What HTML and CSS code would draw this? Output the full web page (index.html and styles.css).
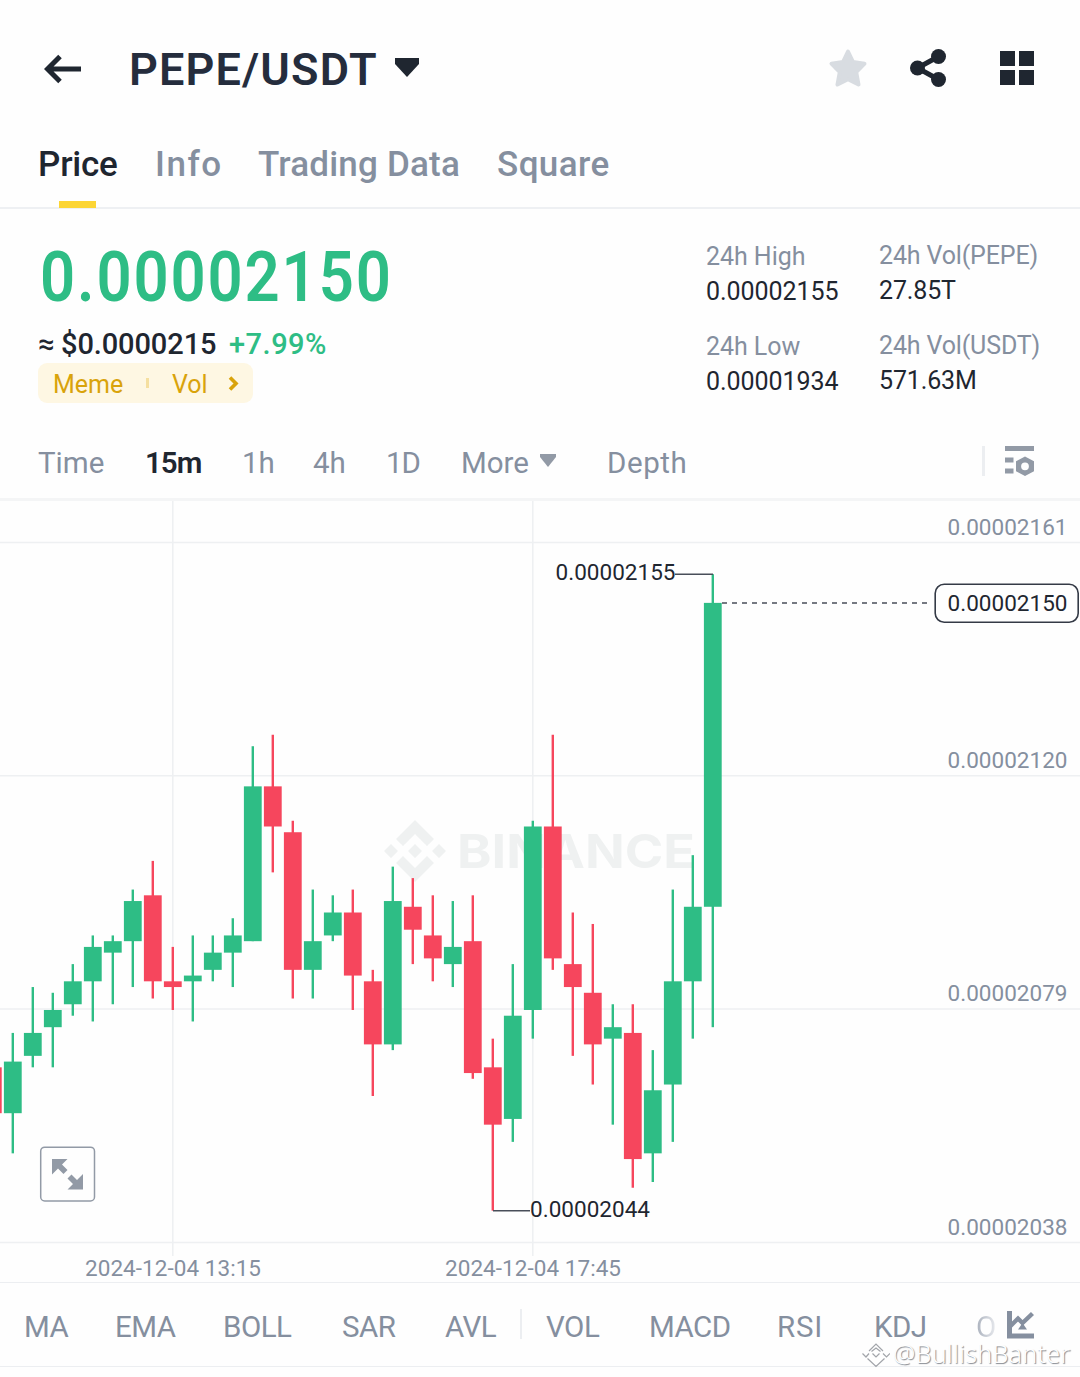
FILE: index.html
```html
<!DOCTYPE html>
<html lang="en">
<head>
<meta charset="utf-8">
<title>PEPE/USDT</title>
<link rel="stylesheet" href="styles.css">
</head>
<body>
<div class="app">
  <header class="topbar">
    <svg class="back" width="38" height="32" viewBox="0 0 38 32"><path d="M37 16H4M16 3.500L3.500 16L16 28.500" fill="none" stroke="#1f2630" stroke-width="5"/></svg>
    <h1 class="pair">PEPE/USDT</h1>
    <svg class="caret" width="24" height="19" viewBox="0 0 24 19"><path d="M0 0H24V6L12 19L0 6Z" fill="#1f2630"/></svg>
    <div class="actions">
      <svg width="40" height="40" viewBox="0 0 40 40"><path d="M20 3.500L25 14L36.500 15.700L28.200 24L30.500 36.500L20 31.300L9.500 36.500L11.800 24L3.500 15.700L15 14Z" fill="#d8dce1" stroke="#d8dce1" stroke-width="4" stroke-linejoin="round"/></svg>
      <svg width="38" height="40" viewBox="0 0 38 40"><path d="M28.500 8.500L7.500 20L28.500 31.500" fill="none" stroke="#1f2630" stroke-width="5"/><g fill="#1f2630"><circle cx="7.500" cy="20" r="7.500"/><circle cx="28.500" cy="8.500" r="7.500"/><circle cx="28.500" cy="31.500" r="7.500"/></g></svg>
      <svg width="34" height="34" viewBox="0 0 34 34"><path d="M0 0H15V15H0ZM19 0H34V15H19ZM0 19H15V34H0ZM19 19H34V34H19Z" fill="#1f2630"/></svg>
    </div>
  </header>

  <nav class="tabs">
    <span class="tab active">Price</span>
    <span class="tab info">Info</span>
    <span class="tab">Trading Data</span>
    <span class="tab square">Square</span>
  </nav>

  <section class="summary">
    <div class="quote">
      <div class="price">0.00002150</div>
      <div class="fiat"><span class="approx">≈</span><span class="usd">$0.0000215</span><span class="change">+7.99%</span></div>
      <div class="tags">
        <span>Meme</span><i></i><span>Vol</span>
        <svg width="11" height="15" viewBox="0 0 11 15"><path d="M2 1.500L8 7.500L2 13.500" fill="none" stroke="#d9a30b" stroke-width="3.600"/></svg>
      </div>
    </div>
    <dl class="stats left">
      <dt>24h High</dt><dd>0.00002155</dd>
      <dt>24h Low</dt><dd>0.00001934</dd>
    </dl>
    <dl class="stats right">
      <dt>24h Vol(PEPE)</dt><dd>27.85T</dd>
      <dt>24h Vol(USDT)</dt><dd>571.63M</dd>
    </dl>
  </section>

  <nav class="intervals">
    <span>Time</span><span class="on">15m</span><span>1h</span><span>4h</span><span class="day">1D</span>
    <span class="more">More<svg width="16" height="13" viewBox="0 0 16 13"><path d="M0 0H16V3L8 13L0 3Z" fill="#929aa6"/></svg></span>
    <span class="depth">Depth</span>
    <i class="rule"></i>
    <svg class="settings" width="30" height="31" viewBox="0 0 30 31"><path d="M0 0H29V5H0ZM0 11.500H8.500V16.500H0ZM0 22.500H8.500V27.500H0Z" fill="#929aa6"/><path fill-rule="evenodd" d="M20 10.500L29 15.300V25.200L20 30L11 25.200V15.300ZM20 16.400A3.900 3.900 0 1 0 20 24.200A3.900 3.900 0 1 0 20 16.400Z" fill="#929aa6"/></svg>
  </nav>

  <svg class="chart" width="1080" height="784" viewBox="0 498 1080 784">
    <g class="grid">
      <path d="M0 542.500H1080M0 775.700H1080M0 1009H1080M0 1242.500H1080M172.800 501V1256M532.800 501V1256"/>
    </g>
    <g class="watermark">
      <path d="M415 820L434 839L427 846L415 834L403 846L396 839ZM415 882L434 863L427 856L415 868L403 856L396 863ZM415 844L422 851L415 858L408 851ZM391 844L398 851L391 858L384 851ZM439 844L446 851L439 858L432 851Z"/>
      <text x="457" y="868" textLength="238" lengthAdjust="spacingAndGlyphs">BINANCE</text>
    </g>
    <g id="candles"></g>
    <g class="callout">
      <path d="M675 574.300H713M493 1210.700H530"/>
      <path d="M722 603H930" stroke-dasharray="5 5"/>
      <rect x="935.200" y="584.200" width="143" height="38" rx="9"/>
      <text x="555.500" y="580" textLength="120">0.00002155</text>
      <text x="530" y="1217" textLength="120">0.00002044</text>
      <text x="947.500" y="611" textLength="120">0.00002150</text>
    </g>
    <g class="axis">
      <text x="947.500" y="535" textLength="120">0.00002161</text>
      <text x="947.500" y="768" textLength="120">0.00002120</text>
      <text x="947.500" y="1001" textLength="120">0.00002079</text>
      <text x="947.500" y="1235" textLength="120">0.00002038</text>
      <text x="85" y="1276" textLength="176">2024-12-04 13:15</text>
      <text x="445" y="1276" textLength="176">2024-12-04 17:45</text>
    </g>
    <g class="expand">
      <rect x="40.700" y="1147.200" width="53.800" height="53.800" rx="4"/>
      <path d="M52 1159H67.500L62 1164.500L67.500 1170L63.500 1174L58 1168.500L52 1174.500ZM83 1189.500H67.500L73 1184L67.500 1178.500L71.500 1174.500L77 1180L83 1174Z"/>
    </g>
  </svg>

  <nav class="indicators">
    <span>MA</span><span>EMA</span><span>BOLL</span><span>SAR</span><span>AVL</span><i></i><span>VOL</span><span>MACD</span><span class="rsi">RSI</span><span>KDJ</span><span class="cut">O</span>
    <svg width="28" height="28" viewBox="0 0 28 28"><path d="M0 0H5V22.500H27V27.500H0Z" fill="#858f9f"/><path d="M3 15.500L11 7.500L15.500 12L25.500 2.500" fill="none" stroke="#858f9f" stroke-width="4.400"/><path d="M15.500 12L20 18.500H11Z" fill="#858f9f"/></svg>
  </nav>

  <div class="credit">
    <svg width="28" height="25" viewBox="0 0 28 25"><path class="face" d="M6 7L14 0L22 7L20 9L14 4L8 9ZM14 8L17 11L14 14L11 11ZM3 8L6 11L3 14L0 11ZM25 8L28 11L25 14L22 11ZM6 15L8 13L14 18L20 13L22 15L14 22Z"/><path class="edge" d="M7 8L14 1L21 8M9.500 8.500L14 5L18.500 8.500M.5 10.500L4 14L7 10.500M10.500 10.500L14 14L17.500 10.500M21 10.500L24.500 14L28 10.500M5.500 15.500L14 23.500L22.500 15.500"/></svg>
    <span>@BullishBanter</span>
  </div>
</div>
<script src="chart.js"></script>
</body>
</html>
```

FILE: styles.css
```css
* { box-sizing: border-box; }
body {
  margin: 0;
  background: #fefefe;
  color: #1f2630;
  font-family: Roboto, "Liberation Sans", sans-serif;
}
.app { position: relative; width: 1080px; height: 1377px; overflow: hidden; display: flex; flex-direction: column; }
svg { display: block; flex: none; }
span, dt, dd { white-space: nowrap; }

.topbar { height: 138px; padding: 0 46px 0 44px; display: flex; align-items: center; }
.pair { margin: 1px 0 0 47px; width: 266px; font-size: 45px; font-weight: 600; letter-spacing: 1.15px; color: #252d3d; line-height: 53px; }
.back { margin-top: -1px; }
.caret { margin-top: -3px; }
.actions { margin: -2px 0 0 auto; display: flex; align-items: center; }
.actions svg + svg { margin-left: 42px; }
.actions svg:last-child { margin-left: 52px; }

.tabs { height: 71px; padding-left: 38px; display: flex; border-bottom: 2px solid #eef0f3; font-size: 35px; font-weight: 500; color: #858f9f; line-height: 53px; gap: 37px; letter-spacing: .2px; }
.tab.active { color: #1f2630; position: relative; width: 80px; letter-spacing: -.2px; }
.tab.active::after { content: ""; position: absolute; left: 21px; top: 63px; width: 37px; height: 7px; background: #fcd535; }
.tab.info { letter-spacing: 1.5px; width: 66px; }
.tab.square { letter-spacing: .4px; }

.summary { height: 217px; display: grid; grid-template-columns: 668px 173px 1fr; padding-left: 38px; }
.price { margin: 27px 0 0 1.5px; height: 82px; line-height: 82px; font-size: 70px; font-weight: 600; letter-spacing: 2.1px; color: #2ebd85; transform: scaleX(.88); transform-origin: 0 0; }
.fiat { height: 45px; line-height: 53px; display: flex; font-size: 29px; font-weight: 500; }
.approx { width: 23px; }
.usd { letter-spacing: -.1px; width: 156px; }
.change { margin-left: 12px; color: #2ebd85; letter-spacing: .5px; }
.tags { width: 215px; height: 40px; border-radius: 9px; background: #fef7e3; display: flex; align-items: center; padding-left: 15px; font-size: 25px; line-height: 31px; letter-spacing: 0; color: #d9a30b; }
.tags span { padding-top: 2px; }
.tags span:first-child { width: 93px; }
.tags i { width: 3px; height: 10px; background: #f5dfa0; margin-right: 23px; }
.tags span:nth-of-type(2) { width: 56px; }
.stats { margin: 30px 0 0; font-size: 25px; line-height: 35px; letter-spacing: -.05px; }
.stats.right { margin-top: 29px; letter-spacing: -.15px; }
.stats dt { color: #858f9f; height: 35px; }
.stats dd { margin: 0 0 20px; height: 35px; }

.intervals { height: 75px; border-bottom: 3px solid #f4f5f6; padding-left: 38px; display: grid; grid-template-columns: 107px 97px 71px 73px 75px 146px 375px 22px 30px; line-height: 74px; font-size: 29.5px; color: #858f9f; }
.intervals .on { color: #1f2630; font-weight: 600; letter-spacing: -1px; }
.intervals .day { letter-spacing: -1px; }
.more { display: flex; }
.more svg { margin: 28px 0 0 11px; }
.depth { letter-spacing: .6px; }
.rule { width: 3px; height: 30px; margin-top: 20px; background: #eceef1; }
.settings { margin: 20px 0 0 1px; }

.chart { height: 784px; margin-top: -3px; }
.grid path { stroke: #eef0f2; stroke-width: 1.6; fill: none; }
.watermark { fill: #eff1f1; font: 700 47px Inter, sans-serif; }
.axis { fill: #858f9f; font-size: 22.5px; }
.callout { fill: #1f2630; font-size: 22.5px; }
.callout path { stroke: #484e59; stroke-width: 1.6; fill: none; }
.callout rect { stroke: #343a46; stroke-width: 1.6; fill: #fefefe; }
.expand rect { fill: #fefefe; stroke: #929aa6; stroke-width: 1.5; }
.expand path { fill: #929aa6; }
.up { fill: #2ebd85; }
.down { fill: #f6465d; }

.indicators { height: 85px; border-top: 1px solid #eceef1; border-bottom: 1px solid #eceef1; padding-left: 24px; display: grid; grid-template-columns: 91px 108px 119px 103px 76px 25px 103px 128px 97px 102px 31px 28px; line-height: 89px; font-size: 29.5px; letter-spacing: -.5px; color: #858f9f; }
.indicators .rsi { letter-spacing: .8px; }
.indicators i { width: 2px; height: 30px; margin-top: 26px; background: #eceef1; margin-left: -1px; }
.indicators svg { margin-top: 28px; }
.cut { width: 20px; color: transparent; background: linear-gradient(90deg, #a9b0bc, #e8eaee); -webkit-background-clip: text; background-clip: text; }

.credit { position: absolute; left: 862px; top: 1336px; display: flex; align-items: center; font: 300 25px/34px "Noto Sans", sans-serif; color: #fff; text-shadow: 1px 1px 1px #83878e; gap: 3px; letter-spacing: .3px; }
.credit svg { margin-top: 5px; }
.credit .face { fill: #fff; }
.credit .edge { fill: none; stroke: #a2a5aa; stroke-width: 1.2; }
```

FILE: chart.js
```js
// Candles, oldest first: [high, body top, body bottom, low, rising].
// Prices are in units of 0.00000001.
const candles = [
  [2069, 2069, 2061, 2061, 0],
  [2075, 2070, 2061, 2054, 1], [2083, 2075, 2071, 2069, 1], [2082, 2079, 2076, 2069, 1],
  [2087, 2084, 2080, 2078, 1], [2092, 2090, 2084, 2077, 1], [2092, 2091, 2089, 2080, 1],
  [2100, 2098, 2091, 2083, 1], [2105, 2099, 2084, 2081, 0], [2090, 2084, 2083, 2079, 0],
  [2092, 2085, 2084, 2077, 1], [2092, 2089, 2086, 2084, 1], [2095, 2092, 2089, 2083, 1],
  [2125, 2118, 2091, 2091, 1], [2127, 2118, 2111, 2103, 0], [2112, 2110, 2086, 2081, 0],
  [2100, 2091, 2086, 2081, 1], [2099, 2096, 2092, 2091, 1], [2100, 2096, 2085, 2079, 0],
  [2086, 2084, 2073, 2064, 0], [2104, 2098, 2073, 2072, 1], [2102, 2097, 2093, 2087, 0],
  [2099, 2092, 2088, 2084, 0], [2098, 2090, 2087, 2083, 1], [2099, 2091, 2068, 2067, 0],
  [2074, 2069, 2059, 2044, 0], [2087, 2078, 2060, 2056, 1], [2112, 2111, 2079, 2074, 1],
  [2127, 2111, 2088, 2086, 0], [2096, 2087, 2083, 2071, 0], [2094, 2082, 2073, 2066, 0],
  [2080, 2076, 2074, 2059, 1], [2080, 2075, 2053, 2048, 0], [2072, 2065, 2054, 2049, 1],
  [2100, 2084, 2066, 2056, 1], [2106, 2097, 2084, 2074, 1], [2155, 2150, 2097, 2076, 1]
];
const toY = (price) => 574.2 + (2155 - price) * 5.734;
const layer = document.getElementById("candles");
const bar = (x, width, from, to, rising) => {
  const rect = document.createElementNS("http://www.w3.org/2000/svg", "rect");
  rect.setAttribute("x", x);
  rect.setAttribute("width", width);
  rect.setAttribute("y", toY(from));
  rect.setAttribute("height", toY(to) - toY(from));
  rect.setAttribute("class", rising ? "up" : "down");
  layer.appendChild(rect);
};
candles.forEach(([high, top, bottom, low, rising], i) => {
  const center = 12.8 + (i - 1) * 20;
  bar(center - 1.2, 2.4, high, low, rising);
  bar(center - 8.9, 17.8, top, bottom, rising);
});
```
